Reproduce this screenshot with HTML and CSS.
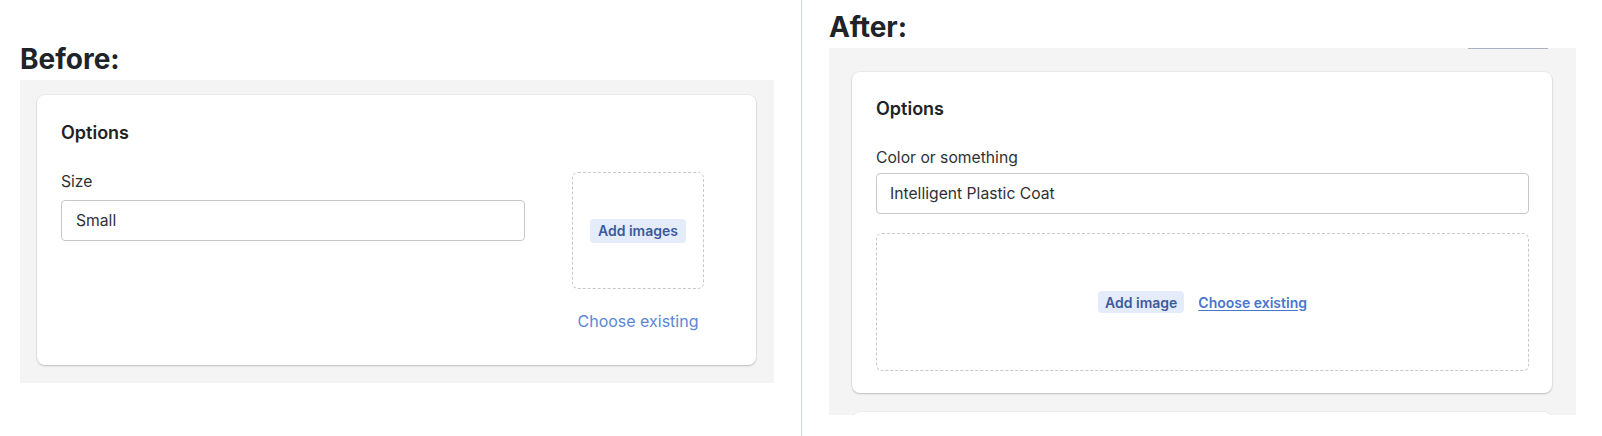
FILE: index.html
```html
<!DOCTYPE html>
<html lang="en">
<head>
<meta charset="utf-8">
<title>Options — before and after</title>
<link rel="stylesheet" href="styles.css">
</head>
<body>
<div class="page">
  <section class="col col-before">
    <h2 class="heading">Before:</h2>
    <div class="panel panel-before">
      <div class="card card-before">
        <h3 class="card-title">Options</h3>
        <div class="before-row">
          <div class="field field-before">
            <label class="label label-before">Size</label>
            <div class="input input-before">Small</div>
          </div>
          <div class="image-col">
            <div class="drop drop-before">
              <span class="badge badge-before">Add images</span>
            </div>
            <a class="choose-before">Choose existing</a>
          </div>
        </div>
      </div>
    </div>
  </section>
  <div class="divider"></div>
  <section class="col col-after">
    <h2 class="heading">After:</h2>
    <div class="panel panel-after">
      <div class="card card-after">
        <h3 class="card-title">Options</h3>
        <label class="label label-after">Color or something</label>
        <div class="input input-after">Intelligent Plastic Coat</div>
        <div class="drop drop-after">
          <span class="badge badge-after">Add image</span>
          <a class="choose-after">Choose existing</a>
        </div>
      </div>
      <div class="card card-next"></div>
    </div>
  </section>
</div>
</body>
</html>
```

FILE: styles.css
```css
* { box-sizing: border-box; }

html, body {
  margin: 0;
  padding: 0;
  background: #ffffff;
  font-family: Inter, "Liberation Sans", Arial, sans-serif;
  color: #202223;
}

.page {
  display: flex;
  width: 1602px;
  height: 436px;
  overflow: hidden;
}

.col {
  display: flex;
  flex-direction: column;
}

.col-before {
  width: 801px;
  padding: 42px 0 0 20px;
}

.col-after {
  padding: 10px 0 0 27px;
}

.divider {
  width: 1px;
  height: 436px;
  background: #d2d6dd;
}

.heading {
  margin: 0 0 4px 0;
  font-size: 28px;
  line-height: 34px;
  font-weight: 700;
  color: #202328;
}

.panel {
  background: #f4f4f4;
}

.panel-before {
  width: 754px;
  padding: 15px 18px 18px 17px;
}

.panel-after {
  position: relative;
  width: 747px;
  height: 367px;
  padding: 24px 24px 0 23px;
  overflow: hidden;
}

.panel-after::before {
  content: "";
  position: absolute;
  top: 0;
  right: 28px;
  width: 80px;
  height: 1px;
  background: #aab1c0;
}

.card {
  background: #ffffff;
  border-radius: 8px;
  box-shadow: 0 0 0 1px rgba(0, 0, 0, 0.03), 0 1px 2px rgba(0, 0, 0, 0.2);
}

.card-before {
  padding: 27px 24px 34px 24px;
}

.card-after {
  padding: 26px 23px 22px 24px;
}

.card-next {
  height: 40px;
  margin-top: 19px;
}

.card-title {
  margin: 0;
  font-size: 18px;
  line-height: 22px;
  font-weight: 600;
  color: #202223;
}

.card-before .card-title { margin-bottom: 28px; }
.card-after .card-title { margin-bottom: 28px; }

.before-row {
  display: flex;
  align-items: flex-start;
}

.field-before {
  width: 464px;
  display: flex;
  flex-direction: column;
}

.label {
  display: block;
  font-size: 15.7px;
  line-height: 20px;
  color: #303133;
}

.label-before { margin-bottom: 8px; }
.label-after { margin-bottom: 5px; }

.input {
  height: 41px;
  border: 1px solid #c6c8cb;
  border-radius: 4px;
  display: flex;
  align-items: center;
  font-size: 15.7px;
  color: #303133;
  background: #fff;
}

.input-before { padding: 0 14px; }
.input-after { padding: 0 13px; }

.image-col {
  margin-left: 47px;
  width: 132px;
  display: flex;
  flex-direction: column;
  align-items: center;
}

.drop {
  border: 1.5px dashed #c8c8c8;
  border-radius: 6px;
  display: flex;
  align-items: center;
  justify-content: center;
}

.drop-before {
  width: 132px;
  height: 117px;
}

.drop-after {
  margin-top: 19px;
  height: 138px;
  gap: 14px;
}

.badge {
  display: inline-flex;
  align-items: center;
  background: #e4ecfb;
  color: #3d5a9c;
  font-weight: 600;
  font-size: 14px;
  border-radius: 4px;
}

.badge-before {
  height: 24px;
  padding: 0 8px;
}

.badge-after {
  height: 22px;
  padding: 0 7px;
}

.choose-before {
  margin-top: 22px;
  font-size: 16px;
  line-height: 20px;
  color: #5b87d5;
}

.choose-after {
  font-size: 14px;
  font-weight: 600;
  color: #4a76cc;
  text-decoration: underline;
  text-underline-offset: 2px;
}
```
